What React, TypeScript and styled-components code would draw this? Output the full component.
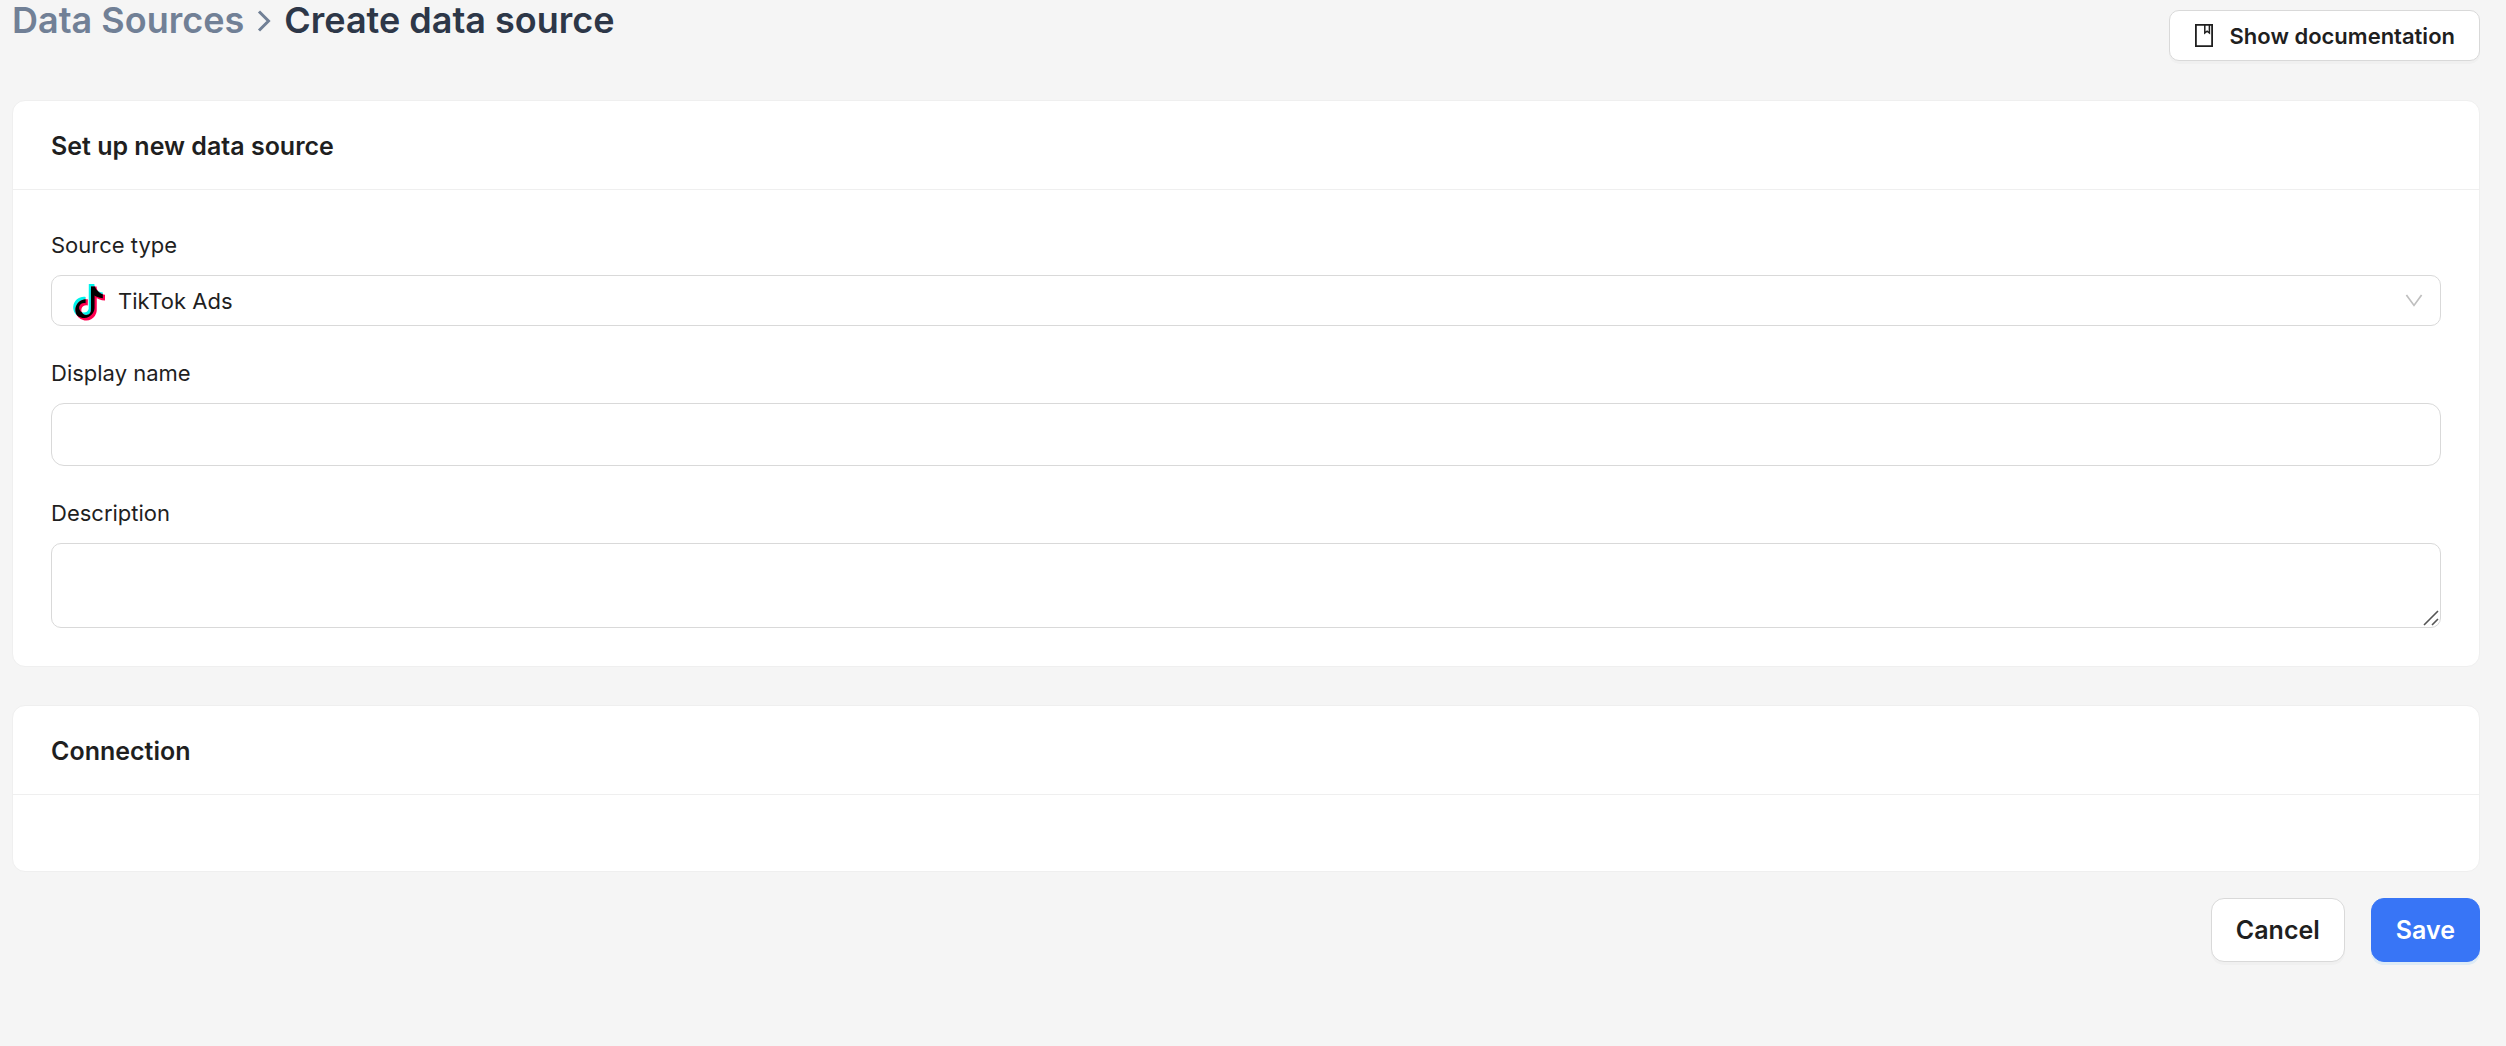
import React from 'react';
import styled, { createGlobalStyle } from 'styled-components';

const GlobalStyle = createGlobalStyle`
  *, *::before, *::after { box-sizing: border-box; }
  body {
    margin: 0;
    background: #f5f5f5;
    color: #1f1f1f;
    font-family: Inter, 'Liberation Sans', sans-serif;
    font-size: 22px;
  }
`;

const Page = styled.div`
  display: flex;
  flex-direction: column;
  padding: 0 26px 26px 12px;
`;

const Header = styled.header`
  display: flex;
  justify-content: space-between;
  align-items: flex-start;
  min-height: 100px;
`;

const Breadcrumb = styled.nav`
  display: flex;
  align-items: center;
  gap: 13px;
  line-height: 41px;
  font-size: 36px;
  font-weight: 600;
  color: #718096;
`;

const Crumb = styled.a`
  color: inherit;
  text-decoration: none;
`;

const Title = styled.h1`
  margin: 0;
  font: inherit;
  color: #2d3748;
`;

const Button = styled.button<{ $primary?: boolean; $small?: boolean }>`
  display: inline-flex;
  align-items: center;
  justify-content: center;
  gap: 16px;
  height: ${(p) => (p.$small ? 51 : 64)}px;
  padding: 0 24px;
  border: 1px solid ${(p) => (p.$primary ? '#3875f6' : '#d9d9d9')};
  border-radius: ${(p) => (p.$small ? 10 : 13)}px;
  background: ${(p) => (p.$primary ? '#3875f6' : '#fff')};
  color: ${(p) => (p.$primary ? '#fff' : '#1f1f1f')};
  box-shadow: 0 3px 0 ${(p) => (p.$primary ? 'rgba(5, 145, 255, 0.1)' : 'rgba(0, 0, 0, 0.02)')};
  font-family: inherit;
  font-size: ${(p) => (p.$small ? 22 : 25)}px;
  font-weight: 600;
  white-space: nowrap;
  cursor: pointer;
`;

const DocsSlot = styled.div`
  padding-top: 10px;
`;

const Form = styled.form`
  display: flex;
  flex-direction: column;
`;

const Card = styled.section`
  margin-bottom: 38px;
  border: 1px solid #efefef;
  border-radius: 13px;
  background: #fff;

  &:last-of-type { margin-bottom: 26px; }
`;

const CardTitle = styled.h2`
  margin: 0;
  padding: 2px 38px 0;
  border-bottom: 1px solid #efefef;
  font-size: 25px;
  font-weight: 600;
  line-height: 86px;
`;

const CardBody = styled.div`
  display: flex;
  flex-direction: column;
  gap: 30px;
  padding: 38px;
`;

const Field = styled.div`
  display: flex;
  flex-direction: column;
  gap: 12px;
`;

const Label = styled.label`
  align-self: flex-start;
  line-height: 35px;
`;

const Control = styled.div`
  display: grid;

  > * { grid-area: 1 / 1; }
  > svg { pointer-events: none; }
`;

const controlStyle = `
  width: 100%;
  margin: 0;
  border: 1px solid #d9d9d9;
  background: #fff;
  color: inherit;
  font: inherit;
  outline-color: #3875f6;
`;

const Select = styled.select`
  ${controlStyle}
  appearance: none;
  height: 51px;
  padding: 0 60px 0 66px;
  border-radius: 10px;
`;

const Input = styled.input`
  ${controlStyle}
  height: 63px;
  padding: 0 18px;
  border-radius: 13px;
`;

const TextArea = styled.textarea`
  ${controlStyle}
  display: block;
  height: 85px;
  padding: 8px 18px;
  border-radius: 10px;
  resize: vertical;

  &::-webkit-resizer { display: none; }
`;

const SourceLogo = styled.svg`
  align-self: center;
  margin: 4px 0 0 22px;
`;

const SelectArrow = styled.svg`
  place-self: center end;
  margin-right: 18px;
`;

const ResizeGrip = styled.svg`
  place-self: end;
  margin: 0 2px 2px 0;
`;

const Actions = styled.div`
  display: flex;
  justify-content: flex-end;
  gap: 26px;
`;

const NOTE =
  'M12.525.02c1.31-.02 2.61-.01 3.91-.02.08 1.53.63 3.09 1.75 4.17 1.12 1.11 2.7 1.62 4.24 1.79v4.03c-1.44-.05-2.89-.35-4.2-.97-.57-.26-1.1-.59-1.62-.93-.01 2.92.01 5.84-.02 8.75-.08 1.4-.54 2.79-1.35 3.94-1.31 1.92-3.58 3.17-5.91 3.21-1.43.08-2.86-.31-4.08-1.03-2.02-1.19-3.44-3.37-3.65-5.71-.02-.5-.03-1-.01-1.49.18-1.9 1.12-3.72 2.58-4.96 1.66-1.44 3.98-2.13 6.15-1.72.02 1.48-.04 2.96-.04 4.44-.99-.32-2.15-.23-3.02.37-.63.41-1.11 1.04-1.36 1.75-.21.51-.15 1.07-.14 1.61.24 1.64 1.82 3.02 3.5 2.87 1.12-.01 2.19-.66 2.77-1.61.19-.33.4-.67.41-1.06.1-1.79.06-3.57.07-5.36.01-4.03-.01-8.05.02-12.07z';

function TikTokLogo() {
  return (
    <SourceLogo width="32" height="37" viewBox="0 0 32 37" aria-hidden="true">
      <defs>
        <clipPath id="note-overlap">
          <path d={NOTE} transform="translate(0.2 2.4) scale(1.42)" />
        </clipPath>
      </defs>
      <path d={NOTE} transform="translate(-2 0) scale(1.42)" fill="#00f2ea" />
      <path d={NOTE} transform="translate(0.2 2.4) scale(1.42)" fill="#ff0050" />
      <g clipPath="url(#note-overlap)">
        <path d={NOTE} transform="translate(-2 0) scale(1.42)" fill="#000" />
      </g>
    </SourceLogo>
  );
}

export default function App() {
  return (
    <>
      <GlobalStyle />
      <Page>
        <Header>
          <Breadcrumb aria-label="Breadcrumb">
            <Crumb href="#data-sources">Data Sources</Crumb>
            <svg width="14" height="22" viewBox="0 0 14 22" fill="none" stroke="#718096" strokeWidth="3" aria-hidden="true">
              <path d="M2 1.5 11.5 11 2 20.5" />
            </svg>
            <Title>Create data source</Title>
          </Breadcrumb>
          <DocsSlot>
            <Button type="button" $small>
              <svg width="20" height="23" viewBox="0 0 20 23" fill="none" stroke="#1f1f1f" strokeWidth="1.8" aria-hidden="true">
                <path d="M1.9 .9h16.2v21.2H1.9z" />
                <path d="M10.8 1v8l2.3-1.8L15.4 9V1" strokeWidth="1.5" />
              </svg>
              Show documentation
            </Button>
          </DocsSlot>
        </Header>
        <Form onSubmit={(e) => e.preventDefault()}>
          <Card>
            <CardTitle>Set up new data source</CardTitle>
            <CardBody>
              <Field>
                <Label htmlFor="source-type">Source type</Label>
                <Control>
                  <Select id="source-type" defaultValue="tiktok">
                    <option value="tiktok">TikTok Ads</option>
                  </Select>
                  <TikTokLogo />
                  <SelectArrow width="18" height="13" viewBox="0 0 18 13" fill="none" stroke="#bfbfbf" strokeWidth="1.7" aria-hidden="true">
                    <path d="M1.4 1 9 11.4 16.6 1" />
                  </SelectArrow>
                </Control>
              </Field>
              <Field>
                <Label htmlFor="display-name">Display name</Label>
                <Input id="display-name" type="text" />
              </Field>
              <Field>
                <Label htmlFor="description">Description</Label>
                <Control>
                  <TextArea id="description" />
                  <ResizeGrip width="16" height="16" viewBox="0 0 16 16" fill="none" stroke="#555" strokeWidth="1.6" aria-hidden="true">
                    <path d="M1 15 15 1M9 15l6-6" />
                  </ResizeGrip>
                </Control>
              </Field>
            </CardBody>
          </Card>
          <Card>
            <CardTitle>Connection</CardTitle>
            <CardBody />
          </Card>
          <Actions>
            <Button type="button">Cancel</Button>
            <Button type="submit" $primary>Save</Button>
          </Actions>
        </Form>
      </Page>
    </>
  );
}
